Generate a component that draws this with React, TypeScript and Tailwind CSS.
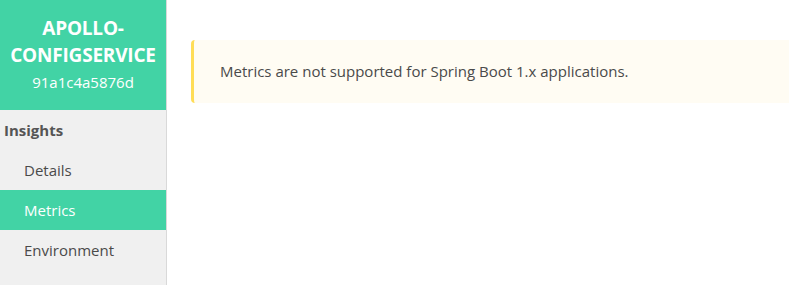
import React from 'react'

const items = ['Details', 'Metrics', 'Environment', 'Configuration Properties']

export default function App() {
    return (
        <div className="flex h-[285px] w-[789px] overflow-hidden bg-white text-[#4a4a4a]" style={{ fontFamily: '"Open Sans", "Noto Sans", sans-serif' }}>
            <aside className="flex w-[167px] shrink-0 flex-col overflow-hidden border-r border-[#d9d9d9] bg-[#f0f0f0]">
                <div className="flex h-[110px] shrink-0 flex-col items-center justify-center bg-[#42d3a5] text-center text-white">
                    <div className="text-[19px] font-bold leading-[27px] tracking-[-0.2px]">
                        APOLLO-<br />CONFIGSERVICE
                    </div>
                    <div className="text-[15px] leading-[26px]">91a1c4a5876d</div>
                </div>
                <div className="shrink-0 px-1 pt-[10px] pb-[10px] text-[15px] font-bold leading-[20px] text-[#555]">Insights</div>
                <ul className="shrink-0">
                    {items.map((item) => (
                        <li
                            key={item}
                            className={
                                item === 'Metrics'
                                    ? 'h-[40px] bg-[#42d3a5] pl-6 text-[15px] leading-[40px] text-white'
                                    : 'h-[40px] pl-6 text-[15px] leading-[40px] text-[#4a4a4a] whitespace-nowrap'
                            }
                        >
                            {item}
                        </li>
                    ))}
                </ul>
            </aside>
            <main className="flex-1 pl-6 pt-10">
                <div className="flex h-[63px] w-[620px] items-center rounded-l border-l-[3px] border-[#ffdd57] bg-[#fffcf3] pl-[26px] text-[15px]">
                    Metrics are not supported for Spring Boot 1.x applications.
                </div>
            </main>
        </div>
    )
}
